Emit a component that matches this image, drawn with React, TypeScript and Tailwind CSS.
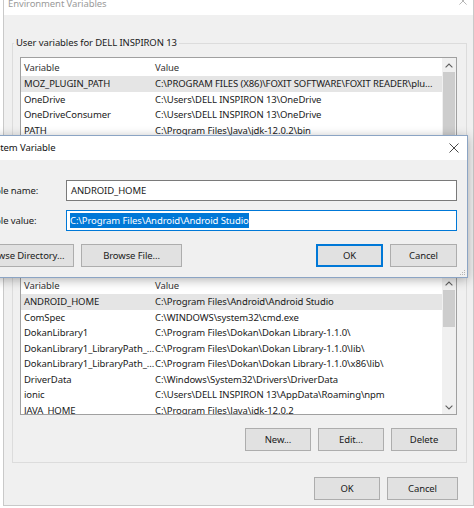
import React from 'react';

type Row = [string, string];

const userVars: Row[] = [
  ['MOZ_PLUGIN_PATH', 'C:\\PROGRAM FILES (X86)\\FOXIT SOFTWARE\\FOXIT READER\\plu...'],
  ['OneDrive', 'C:\\Users\\DELL INSPIRON 13\\OneDrive'],
  ['OneDriveConsumer', 'C:\\Users\\DELL INSPIRON 13\\OneDrive'],
  ['PATH', 'C:\\Program Files\\Java\\jdk-12.0.2\\bin'],
  ['TEMP', 'C:\\Users\\DELL INSPIRON 13\\AppData\\Local\\Temp'],
  ['TMP', 'C:\\Users\\DELL INSPIRON 13\\AppData\\Local\\Temp'],
];

const systemVars: Row[] = [
  ['ANDROID_HOME', 'C:\\Program Files\\Android\\Android Studio'],
  ['ComSpec', 'C:\\WINDOWS\\system32\\cmd.exe'],
  ['DokanLibrary1', 'C:\\Program Files\\Dokan\\Dokan Library-1.1.0\\'],
  ['DokanLibrary1_LibraryPath_...', 'C:\\Program Files\\Dokan\\Dokan Library-1.1.0\\lib\\'],
  ['DokanLibrary1_LibraryPath_...', 'C:\\Program Files\\Dokan\\Dokan Library-1.1.0\\x86\\lib\\'],
  ['DriverData', 'C:\\Windows\\System32\\Drivers\\DriverData'],
  ['ionic', 'C:\\Users\\DELL INSPIRON 13\\AppData\\Roaming\\npm'],
  ['JAVA_HOME', 'C:\\Program Files\\Java\\jdk-12.0.2'],
];

function Chevron({ down }: { down?: boolean }) {
  return (
    <svg width="8" height="5" viewBox="0 0 8 5" className={down ? 'rotate-180' : ''}>
      <path d="M0.6 4.4 L4 1 L7.4 4.4" fill="none" stroke="#606060" strokeWidth="1.1" />
    </svg>
  );
}

function CloseX({ color, size }: { color: string; size: number }) {
  return (
    <svg width={size} height={size} viewBox="0 0 10 10">
      <path d="M0.5 0.5 L9.5 9.5 M9.5 0.5 L0.5 9.5" stroke={color} strokeWidth="0.9" />
    </svg>
  );
}

function VarList({
  rows,
  className,
  thumbHeight,
}: {
  rows: Row[];
  className: string;
  thumbHeight: number;
}) {
  return (
    <div className={`flex overflow-hidden border border-[#a0a0a0] bg-white ${className}`}>
      <div className="min-w-0 flex-1 overflow-hidden">
        <div className="flex h-[18px] items-center text-[#333]">
          <span className="w-[134px] shrink-0 pl-[3px]">Variable</span>
          <span>Value</span>
        </div>
        {rows.map(([name, value], i) => (
          <div
            key={i}
            className={`flex h-[15.5px] items-center whitespace-nowrap ${i === 0 ? 'bg-[#e5e5e5]' : ''}`}
          >
            <span className="w-[134px] shrink-0 overflow-hidden pl-[3px]">{name}</span>
            <span>{value}</span>
          </div>
        ))}
      </div>
      <div className="flex w-[14px] shrink-0 flex-col bg-[#f0f0f0]">
        <div className="flex h-[14px] items-center justify-center">
          <Chevron />
        </div>
        <div className="mx-[1px] bg-[#cdcdcd]" style={{ height: thumbHeight }} />
        <div className="flex-1" />
        <div className="flex h-[14px] items-center justify-center">
          <Chevron down />
        </div>
      </div>
    </div>
  );
}

function Btn({
  children,
  className,
  primary,
}: {
  children: React.ReactNode;
  className: string;
  primary?: boolean;
}) {
  return (
    <div
      className={`flex h-[23px] shrink-0 items-center justify-center bg-[#e1e1e1] ${
        primary
          ? 'border border-[#0078d7] shadow-[inset_0_0_0_1px_#0078d7]'
          : 'border border-[#adadad]'
      } ${className}`}
    >
      {children}
    </div>
  );
}

function Group({
  label,
  className,
  children,
}: {
  label: string;
  className: string;
  children: React.ReactNode;
}) {
  return (
    <fieldset className={`border border-[#dcdcdc] pl-[7px] pr-[9px] ${className}`}>
      <legend className="-ml-[6px] px-[2px] leading-[16px]">{label}</legend>
      {children}
    </fieldset>
  );
}

function ListButtons({ className }: { className: string }) {
  return (
    <div className={`flex justify-end gap-[7px] ${className}`}>
      <Btn className="w-[66px]">New...</Btn>
      <Btn className="w-[66px]">Edit...</Btn>
      <Btn className="w-[66px]">Delete</Btn>
    </div>
  );
}

function EditDialog() {
  return (
    <div className="absolute left-[-40px] top-[135px] flex w-[508px] flex-col border border-[#8ba4c4] bg-[#f0f0f0] shadow-[0_2px_10px_rgba(0,0,0,0.3)]">
      <div className="flex h-[24px] items-center justify-between bg-white pl-[6px] pr-[8px]">
        <span className="leading-[16px] text-[#111]">Edit System Variable</span>
        <CloseX color="#333" size={10} />
      </div>
      <div className="flex flex-col pb-[10px] pl-[12px] pr-[10px] pt-[20px]">
        <div className="flex h-[21px] items-center">
          <span className="w-[93px] shrink-0">Variable name:</span>
          <div className="flex h-full flex-1 items-center border border-[#7a7a7a] bg-white pl-[4px]">
            ANDROID_HOME
          </div>
        </div>
        <div className="mt-[9px] flex h-[21px] items-center">
          <span className="w-[93px] shrink-0">Variable value:</span>
          <div className="flex h-full flex-1 items-center border border-[#0078d7] bg-white pl-[3px]">
            <span className="bg-[#0078d7] leading-[15px] text-white">
              C:\Program Files\Android\Android Studio
            </span>
          </div>
        </div>
        <div className="mt-[13px] flex gap-[7px]">
          <Btn className="w-[101px]">Browse Directory...</Btn>
          <Btn className="w-[101px]">Browse File...</Btn>
          <div className="flex-1" />
          <Btn className="w-[67px]" primary>
            OK
          </Btn>
          <Btn className="w-[67px]">Cancel</Btn>
        </div>
      </div>
      {/* resize grip */}
      <svg className="absolute bottom-[1px] right-[1px]" width="7" height="7" viewBox="0 0 7 7">
        <rect x="5" y="1" width="1" height="1" fill="#b5b5b5" />
        <rect x="3" y="3" width="1" height="1" fill="#b5b5b5" />
        <rect x="5" y="3" width="1" height="1" fill="#b5b5b5" />
        <rect x="1" y="5" width="1" height="1" fill="#b5b5b5" />
        <rect x="3" y="5" width="1" height="1" fill="#b5b5b5" />
        <rect x="5" y="5" width="1" height="1" fill="#b5b5b5" />
      </svg>
    </div>
  );
}

export default function App() {
  return (
    <div className="relative h-[508px] w-[474px] overflow-hidden bg-white font-['Noto_Sans',sans-serif] text-[9.5px] leading-[15px] tracking-[-0.1px] text-[#1a1a1a]">
      <div className="ml-[3px] flex h-[506px] w-[471px] flex-col border-x border-b border-[#c9c9c9] bg-[#f0f0f0]">
        <div className="flex h-[15px] shrink-0 items-start justify-between overflow-hidden bg-white pl-[4px] pr-[6px]">
          <span className="-mt-[4px] leading-[16px] text-[#9a9a9a]">Environment Variables</span>
          <div className="-mt-[3px]">
            <CloseX color="#9a9a9a" size={8} />
          </div>
        </div>
        <div className="flex flex-1 flex-col pl-[8px] pr-[6px] pt-[20px]">
          <Group label="User variables for DELL INSPIRON 13" className="pb-[13px]">
            <VarList rows={userVars} className="mt-[6px] h-[143px]" thumbHeight={100} />
            <ListButtons className="mt-[12px]" />
          </Group>
          <Group label="System variables" className="mt-[4px] pb-[11px]">
            <VarList rows={systemVars} className="mt-[6px] h-[140px]" thumbHeight={37} />
            <ListButtons className="mt-[13px]" />
          </Group>
          <div className="mt-[14px] flex justify-end gap-[7px] pr-[9px]">
            <Btn className="w-[66px]">OK</Btn>
            <Btn className="w-[71px]">Cancel</Btn>
          </div>
        </div>
      </div>
      <EditDialog />
    </div>
  );
}
